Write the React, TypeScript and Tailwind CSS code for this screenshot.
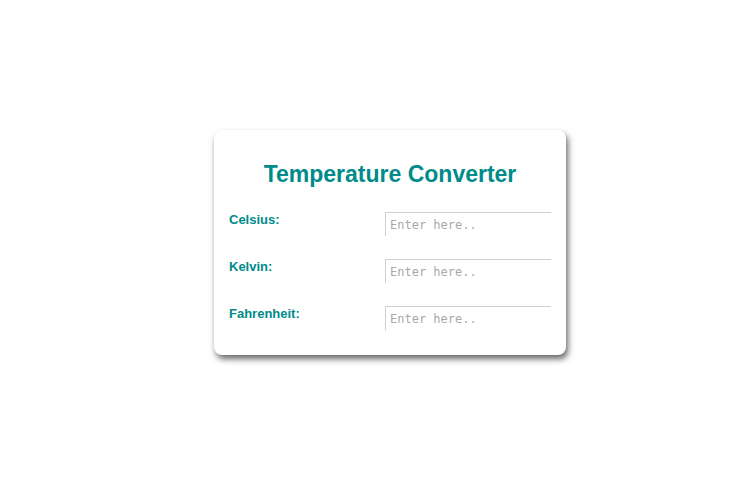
import React from 'react';

const fields = ['Celsius', 'Kelvin', 'Fahrenheit'];

const App: React.FC = () => {
  return (
    <div className="w-[750px] h-[477px] bg-white pt-[130px] pl-[214px]">
      <div className="w-[352px] bg-white rounded-lg shadow-[2px_4px_6px_rgba(0,0,0,0.6)] pt-[29px] pb-[25px] px-[15px] font-['Liberation_Sans',Arial,sans-serif]">
        <h1 className="text-[23px] font-bold text-[#008b8b] text-center leading-[30px]">Temperature Converter</h1>

        <div className="mt-[23px] flex flex-col gap-[23px]">
          {fields.map((f) => (
            <div key={f} className="flex items-start">
              <label className="w-[156px] text-[13px] font-bold text-[#008b8b] leading-[15px]">{f}:</label>
              <input
                type="text"
                placeholder="Enter here.."
                className="w-[166px] h-[24px] border-t border-l border-[#cfcfcf] pl-[4px] text-[12px] font-['DejaVu_Sans_Mono',monospace] placeholder:text-[#a9a9a9] outline-none"
              />
            </div>
          ))}
        </div>
      </div>
    </div>
  );
};

export default App;
